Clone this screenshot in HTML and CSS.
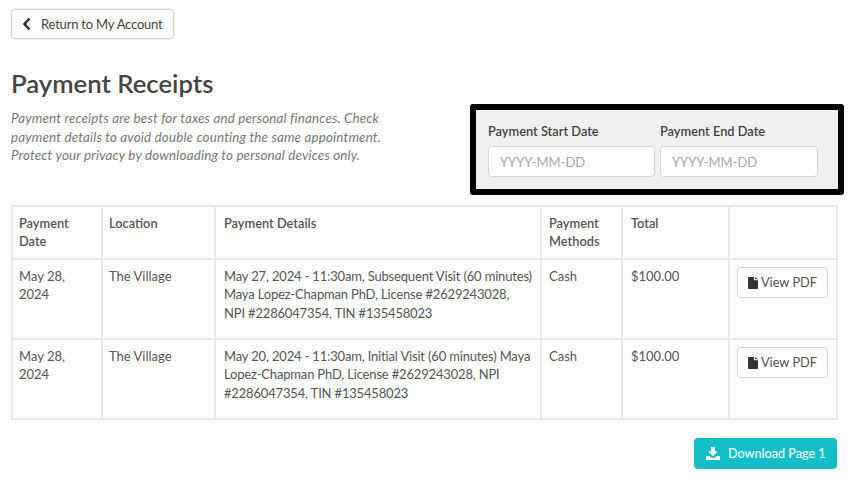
FILE: index.html
```html
<!DOCTYPE html>
<html lang="en">
<head>
<meta charset="utf-8">
<title>Payment Receipts</title>
<link rel="stylesheet" href="styles.css">
</head>
<body>
<main class="page">
  <a class="btn back" href="#">
    <svg class="chev" viewBox="0 0 10 14" width="10" height="14"><path d="M7.5 1.5 2.5 7l5 5.5" fill="none" stroke="#333" stroke-width="2.6"/></svg>
    <span>Return to My Account</span>
  </a>
  <h1>Payment Receipts</h1>
  <div class="intro">
    <p class="note">Payment receipts are best for taxes and personal finances. Check<br>payment details to avoid double counting the same appointment.<br>Protect your privacy by downloading to personal devices only.</p>
    <form class="filter">
      <label class="field start"><span>Payment Start Date</span><input type="text" placeholder="YYYY-MM-DD"></label>
      <label class="field end"><span>Payment End Date</span><input type="text" placeholder="YYYY-MM-DD"></label>
    </form>
  </div>
  <table>
    <colgroup><col class="c1"><col class="c2"><col class="c3"><col class="c4"><col class="c5"><col class="c6"></colgroup>
    <thead>
      <tr><th>Payment Date</th><th>Location</th><th>Payment Details</th><th>Payment Methods</th><th>Total</th><th></th></tr>
    </thead>
    <tbody>
      <tr>
        <td>May 28, 2024</td><td>The Village</td>
        <td class="details">May 27, 2024 - 11:30am, Subsequent Visit (60 minutes)<br>Maya Lopez-Chapman PhD, License #2629243028,<br>NPI #2286047354, TIN #135458023</td>
        <td>Cash</td><td>$100.00</td>
        <td><a class="btn pdf" href="#"><svg viewBox="0 0 10 12" width="10" height="12"><path d="M0 1a1 1 0 0 1 1-1h5v3.2h4V11a1 1 0 0 1-1 1H1a1 1 0 0 1-1-1zM7 0l3 2.3H7z" fill="#333"/></svg>View PDF</a></td>
      </tr>
      <tr>
        <td>May 28, 2024</td><td>The Village</td>
        <td class="details">May 20, 2024 - 11:30am, Initial Visit (60 minutes) Maya<br>Lopez-Chapman PhD, License #2629243028, NPI<br>#2286047354, TIN #135458023</td>
        <td>Cash</td><td>$100.00</td>
        <td><a class="btn pdf" href="#"><svg viewBox="0 0 10 12" width="10" height="12"><path d="M0 1a1 1 0 0 1 1-1h5v3.2h4V11a1 1 0 0 1-1 1H1a1 1 0 0 1-1-1zM7 0l3 2.3H7z" fill="#333"/></svg>View PDF</a></td>
      </tr>
    </tbody>
  </table>
  <div class="actions">
    <a class="download" href="#">
      <svg viewBox="0 0 14 13" width="14" height="13"><path d="M5 0h4v4.5h2.8L7 9.3 2.2 4.5H5zM0 9h3.4L5.6 11h2.8L10.6 9H14v4H0z" fill="#fff"/></svg>
      <span>Download Page 1</span>
    </a>
  </div>
</main>
</body>
</html>
```
FILE: styles.css
```css
* { box-sizing: border-box; }
html, body { margin: 0; background: #fff; }
body { font-family: Lato, "Open Sans", sans-serif; font-size: 14px; color: #4a4a4a; }
.page { width: 850px; height: 488px; padding: 9px 13px 0 11px; overflow: hidden; }
.btn { display: inline-flex; align-items: center; background: #fff; border: 1px solid #d6d6d6; border-radius: 4px; color: #444; text-decoration: none; white-space: nowrap; }
.back { width: 163px; height: 30px; padding-left: 10px; gap: 9px; box-shadow: 0 0 0 .5px #e4e4e4; }
.back span { font-size: 13px; letter-spacing: -.2px; }
h1 { margin: 26px 0 0; font-size: 25.7px; line-height: 37px; font-weight: 600; color: #444; }
.intro { display: flex; justify-content: space-between; align-items: flex-start; margin-top: 2px; margin-right: -7px; height: 101px; }
.note { margin: 5px 0 0; font-size: 13.4px; line-height: 18.5px; font-style: italic; color: #777; letter-spacing: .16px; white-space: nowrap; }
.filter { display: flex; gap: 5px; width: 374px; height: 91px; padding: 13px 0 0 12px; background: #f0f0f0; border: 6px solid #000; border-radius: 3px; }
.field { display: flex; flex-direction: column; gap: 7px; }
.field span { font-size: 12.8px; line-height: 16px; font-weight: 600; color: #444; }
.field input { width: 100%; height: 31px; padding: 0 11px; border: 1px solid #d6d6d6; border-radius: 4px; background: #fff; font: 13px Lato, sans-serif; outline: 0; }
.field input::placeholder { color: #a8a8a8; opacity: 1; }
.start { width: 167px; }
.end { width: 158px; }
table { width: 825px; height: 213px; border-collapse: collapse; table-layout: fixed; border: 2px solid #e8e8e8; }
.c1 { width: 90px; } .c2 { width: 113px; } .c3 { width: 326px; } .c4 { width: 81px; } .c5 { width: 107px; } .c6 { width: 108px; }
th, td { border: 2px solid #e8e8e8; padding: 7px 7px 0 7px; vertical-align: top; text-align: left; font-size: 13px; line-height: 18.3px; }
th { height: 53px; font-size: 12.8px; font-weight: 600; color: #555; }
td { height: 80px; font-weight: 400; color: #555; }
th:nth-child(1), td:nth-child(1), th:nth-child(2), td:nth-child(2) { padding-left: 6px; }
th:nth-child(3), td:nth-child(3), th:nth-child(5), td:nth-child(5) { padding-left: 8px; }
.details { white-space: nowrap; letter-spacing: -.17px; }
.pdf { justify-content: center; gap: 3px; width: 91px; height: 31px; color: #555; font-size: 12.8px; }
.actions { display: flex; justify-content: flex-end; margin-top: 18px; }
.download { display: flex; align-items: center; gap: 8px; width: 143px; height: 31px; padding-left: 12px; background: #12bfc9; border-radius: 4px; color: #f2fdfd; text-decoration: none; font-size: 12.6px; font-weight: 500; white-space: nowrap; }
```
